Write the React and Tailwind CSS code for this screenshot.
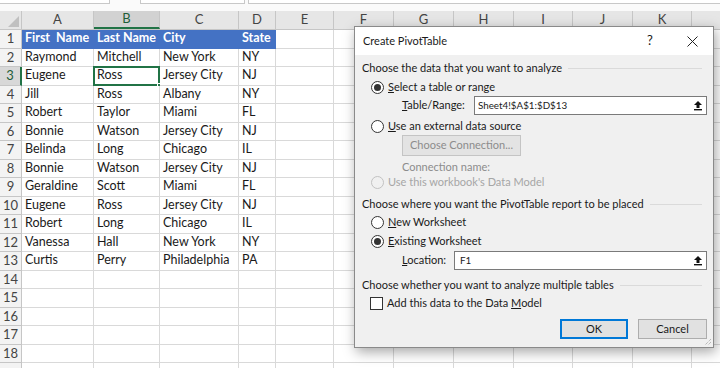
import React from 'react';

const cols = [
  { k: 'A', w: 'w-[72px]' },
  { k: 'B', w: 'w-[66px]' },
  { k: 'C', w: 'w-[79px]' },
  { k: 'D', w: 'w-[37px]' },
  { k: 'E', w: 'w-[58px]' },
  { k: 'F', w: 'w-[60px]' },
  { k: 'G', w: 'w-[60px]' },
  { k: 'H', w: 'w-[60px]' },
  { k: 'I', w: 'w-[59px]' },
  { k: 'J', w: 'w-[60px]' },
  { k: 'K', w: 'w-[59px]' },
  { k: '', w: 'w-[60px]' },
];

const data = [
  ['First  Name', 'Last Name', 'City', 'State'],
  ['Raymond', 'Mitchell', 'New York', 'NY'],
  ['Eugene', 'Ross', 'Jersey City', 'NJ'],
  ['Jill', 'Ross', 'Albany', 'NY'],
  ['Robert', 'Taylor', 'Miami', 'FL'],
  ['Bonnie', 'Watson', 'Jersey City', 'NJ'],
  ['Belinda', 'Long', 'Chicago', 'IL'],
  ['Bonnie', 'Watson', 'Jersey City', 'NJ'],
  ['Geraldine', 'Scott', 'Miami', 'FL'],
  ['Eugene', 'Ross', 'Jersey City', 'NJ'],
  ['Robert', 'Long', 'Chicago', 'IL'],
  ['Vanessa', 'Hall', 'New York', 'NY'],
  ['Curtis', 'Perry', 'Philadelphia', 'PA'],
];

const Radio = ({ checked, disabled }) => (
  <span
    className={`w-[13px] h-[13px] rounded-full border flex items-center justify-center shrink-0 ${
      disabled ? 'border-[#c2c2c2] bg-[#f0f0f0]' : 'border-[#333] bg-white'
    }`}
  >
    {checked && <span className="w-[7px] h-[7px] rounded-full bg-[#333]" />}
  </span>
);

const Section = ({ children }) => (
  <div className="flex items-center h-[18px] pr-[5px]">
    <span className="whitespace-nowrap">{children}</span>
    <span className="flex-1 h-px bg-[#dadada] ml-[6px]" />
  </div>
);

// range picker arrow in the input boxes
const PickIcon = () => (
  <svg width="10" height="11" viewBox="0 0 10 11">
    <path d="M5 1 L9 5 H6.5 V8 H3.5 V5 H1 Z" fill="#111" />
    <rect x="1" y="9" width="8" height="1.4" fill="#111" />
  </svg>
);

const Sheet = () => (
  <div className="font-[Lato,sans-serif] text-[12.5px] text-[#1a1a1a]">
    {/* formula bar strip */}
    <div className="h-[11px] bg-[#fafafa] flex">
      <div className="w-[110px] h-[4px] bg-white border-b border-r border-[#c8c8c8]" />
      <div className="w-[30px] h-[4px]" />
      <div className="w-[105px] h-[4px] bg-white border-b border-l border-r border-[#c8c8c8]" />
      <div className="w-[3px]" />
      <div className="flex-1 h-[4px] bg-white border-b border-l border-[#c8c8c8]" />
    </div>
    {/* column headers */}
    <div className="flex h-[19px] bg-[#e6e6e6] border-b border-[#c6c6c6] text-[#444] text-[13px]">
      <div className="w-[22px] border-r border-[#c6c6c6] relative shrink-0">
        <svg className="absolute right-[2px] bottom-[2px]" width="11" height="11" viewBox="0 0 11 11">
          <path d="M11 0 V11 H0 Z" fill="#c0c0c0" />
        </svg>
      </div>
      {cols.map((c, i) => (
        <div
          key={i}
          className={`${c.w} shrink-0 border-r border-[#c6c6c6] flex items-center justify-center ${
            c.k === 'B' ? 'bg-[#d2d2d2] border-b-2 border-b-[#217346] text-[#1e5e38]' : ''
          }`}
        >
          {c.k}
        </div>
      ))}
    </div>
    {/* rows */}
    {Array.from({ length: 19 }).map((_, r) => {
      const row = data[r];
      const isHead = r === 0;
      return (
        <div key={r} className="flex h-[18.5px]">
          <div
            className={`w-[22px] shrink-0 border-r border-b border-[#c6c6c6] flex items-center justify-center text-[13px] ${
              r === 2 ? 'bg-[#d8d8d8] text-[#1e5e38] border-r-2 border-r-[#217346]' : 'bg-[#f3f3f3] text-[#444]'
            }`}
          >
            {r < 18 ? r + 1 : ''}
          </div>
          {cols.map((c, ci) => {
            const val = row && ci < 4 ? row[ci] : '';
            const blue = isHead && ci < 4;
            const sel = r === 2 && ci === 1;
            return (
              <div
                key={ci}
                className={`${c.w} shrink-0 relative flex items-center pl-[3px] whitespace-pre ${
                  blue
                    ? 'bg-[#4472c4] text-white font-bold border-b border-[#4472c4]'
                    : 'bg-white border-r border-b border-[#d9d9d9]'
                }`}
              >
                {val}
                {sel && (
                  <>
                    <span className="absolute -left-px -top-px -right-px -bottom-px border-2 border-[#217346]" />
                    <span className="absolute -right-[3px] -bottom-[3px] w-[5px] h-[5px] bg-[#217346] border border-white" />
                  </>
                )}
              </div>
            );
          })}
        </div>
      );
    })}
  </div>
);

const Dialog = () => (
  <div className="absolute left-[354px] top-[26px] w-[360px] bg-[#f0f0f0] border border-[#8a8a8a] shadow-[2px_4px_12px_rgba(0,0,0,0.35)] font-[Lato,sans-serif] text-[11px] text-[#1a1a1a]">
    <div className="h-[28px] bg-white flex items-center pl-[8px] pr-[15px] text-[11px]">
      <span className="flex-1">Create PivotTable</span>
      <span className="w-[10px] text-[13px] mr-[30px]">?</span>
      <svg width="11" height="11" viewBox="0 0 11 11">
        <path d="M0.5 0.5 L10.5 10.5 M10.5 0.5 L0.5 10.5" stroke="#222" strokeWidth="1" />
      </svg>
    </div>
    <div className="pl-[7px] pr-[6px] pb-[8px] flex flex-col">
      <div className="mt-[4px]">
        <Section>Choose the data that you want to analyze</Section>
      </div>
      <div className="flex items-center h-[18px] mt-[1px] pl-[9px] gap-[4px]">
        <Radio checked />
        <span>
          <u>S</u>elect a table or range
        </span>
      </div>
      <div className="flex items-center h-[19px] pl-[40px]">
        <span className="w-[72px]">
          <u>T</u>able/Range:
        </span>
        <div className="flex-1 h-[19px] bg-white border border-[#7a7a7a] flex items-center">
          <span className="flex-1 pl-[3px] text-[9.8px]">Sheet4!$A$1:$D$13</span>
          <span className="w-[17px] h-full flex items-center justify-center">
            <PickIcon />
          </span>
        </div>
      </div>
      <div className="flex items-center h-[18px] mt-[2px] pl-[9px] gap-[4px]">
        <Radio />
        <span>
          <u>U</u>se an external data source
        </span>
      </div>
      <div className="h-[21px] pl-[40px] flex">
        <div className="w-[119px] h-full bg-[#e3e3e3] border border-[#c4c4c4] flex items-center justify-center text-[#8c8c8c]">
          Choose Connection...
        </div>
      </div>
      <div className="h-[16px] mt-[3px] pl-[40px] flex items-center text-[#8c8c8c]">Connection name:</div>
      <div className="flex items-center h-[15px] pl-[9px] gap-[4px] text-[#a6a6a6]">
        <Radio disabled />
        <span>Use this workbook's Data Model</span>
      </div>
      <div className="mt-[5px]">
        <Section>Choose where you want the PivotTable report to be placed</Section>
      </div>
      <div className="flex items-center h-[18px] pl-[9px] gap-[4px]">
        <Radio />
        <span>
          <u>N</u>ew Worksheet
        </span>
      </div>
      <div className="flex items-center h-[18px] mt-[1px] pl-[9px] gap-[4px]">
        <Radio checked />
        <span>
          <u>E</u>xisting Worksheet
        </span>
      </div>
      <div className="flex items-center h-[19px] mt-[1px] pl-[40px]">
        <span className="w-[52px]">
          <u>L</u>ocation:
        </span>
        <div className="flex-1 h-[19px] bg-white border border-[#7a7a7a] flex items-center">
          <span className="flex-1 pl-[5px] text-[9.8px]">F1</span>
          <span className="w-[17px] h-full flex items-center justify-center">
            <PickIcon />
          </span>
        </div>
      </div>
      <div className="mt-[6px]">
        <Section>Choose whether you want to analyze multiple tables</Section>
      </div>
      <div className="flex items-center h-[18px] pl-[8px] gap-[4px]">
        <span className="w-[13px] h-[13px] bg-white border border-[#333]" />
        <span>
          Add this data to the Data <u>M</u>odel
        </span>
      </div>
      <div className="flex justify-end gap-[10px] mt-[7px]">
        <div className="w-[68px] h-[20px] bg-[#e1e1e1] border-2 border-[#0078d7] flex items-center justify-center">OK</div>
        <div className="w-[69px] h-[20px] bg-[#e1e1e1] border border-[#adadad] flex items-center justify-center">Cancel</div>
      </div>
    </div>
    {/* resize grip */}
    <svg className="absolute right-[1px] bottom-[1px]" width="10" height="10" viewBox="0 0 10 10">
      <path d="M9 3 L3 9 M9 6 L6 9" stroke="#a0a0a0" strokeWidth="1" strokeDasharray="1 1" />
    </svg>
  </div>
);

export default function App() {
  return (
    <div className="relative w-[720px] h-[368px] overflow-hidden bg-white">
      <Sheet />
      <Dialog />
    </div>
  );
}
